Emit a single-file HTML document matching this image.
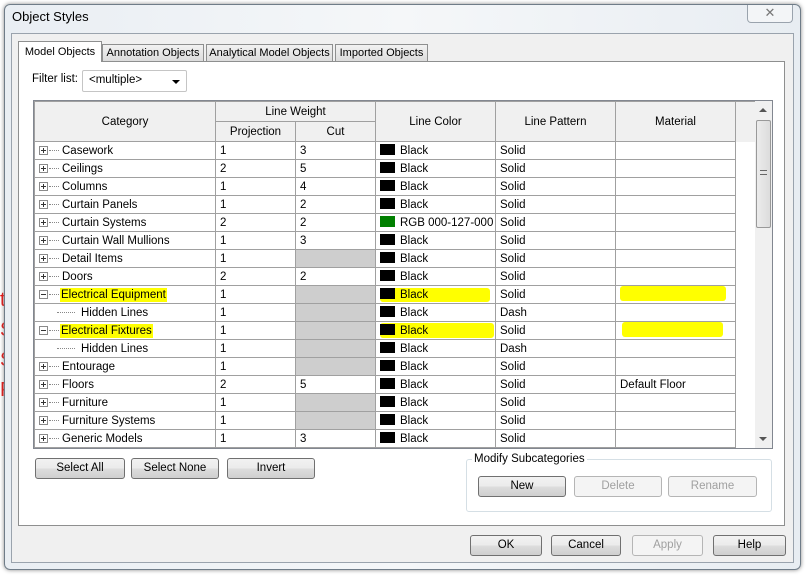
<!DOCTYPE html>
<html><head><meta charset="utf-8"><style>
*{box-sizing:border-box;margin:0;padding:0}
body{width:806px;height:575px;overflow:hidden;background:#fff;font-family:"Liberation Sans",sans-serif;font-size:11.5px;color:#000;position:relative}
.a{position:absolute;white-space:nowrap}
.btn{position:absolute;height:21px;border:1px solid #707070;border-radius:3px;background:linear-gradient(#f2f2f2,#ebebeb 50%,#dddddd 51%,#cfcfcf);text-align:center;line-height:19px;font-size:11.5px}
.dis{color:#a0a0a0;border-color:#b5b5b5;background:#f4f4f4}
table{position:absolute;left:34px;top:101px;width:721px;border-collapse:collapse;table-layout:fixed;background:#fff}
td,th{border:1px solid #a0a0a0;height:18px;padding:0 0 0 4px;white-space:nowrap;overflow:hidden;font-weight:normal;text-align:left;line-height:16px}
th{background:#f0f0f0;text-align:center;height:20px;padding:0}
.h{background:repeating-conic-gradient(#b0b0b0 0 25%,#ececec 0 50%) 0 0/2px 2px}
.sw{display:inline-block;width:15px;height:11px;background:#000;vertical-align:-1px;margin-right:5px}
.pl{display:inline-block;width:9px;height:9px;border:1px solid #8a8a8a;position:relative;vertical-align:-1px;margin-right:1px;background:#fff}
.pl:before{content:"";position:absolute;left:1px;top:3px;width:5px;height:1px;background:#333}
.pl.p:after{content:"";position:absolute;left:3px;top:1px;width:1px;height:5px;background:#333}
.dl{display:inline-block;width:10px;border-top:1px dotted #888;vertical-align:3px;margin-right:3px}
.hl{background:#ffff00;padding:1px 1px;margin-left:-2px}
.yl{position:absolute;background:#ffff00;border-radius:3px}
.tab{position:absolute;top:44px;height:18px;background:linear-gradient(#f2f2f2,#dcdcdc);border:1px solid #8e8f8f;text-align:center;line-height:16px;font-size:11px;white-space:nowrap}
</style></head><body>
<div class="a" style="left:0;top:95px;width:10px;height:470px;background:#fff;color:#e00;font-size:20px;line-height:30px;padding-top:190px">t<br>S<br>S<br>F</div>
<div class="a" style="left:4px;top:4px;width:797px;height:566px;border:1px solid #6f7c88;border-radius:6px;background:linear-gradient(90deg,#e9eef3,#f5f7f9 50%,#e8edf2);box-shadow:0 0 4px #888"></div>
<div class="a" style="left:12px;top:9px;font-size:13px">Object Styles</div>
<div class="a" style="left:747px;top:5px;width:46px;height:18px;border:1px solid #9aa3ad;border-top:none;border-radius:0 0 4px 4px;background:#f3f5f7;text-align:center;color:#777;font-size:13px;line-height:16px">✕</div>
<div class="a" style="left:11px;top:33px;width:783px;height:530px;background:#f0f0f0;border:1px solid #9aa3ad"></div>
<div class="a" style="left:18px;top:61px;width:767px;height:465px;background:#fff;border:1px solid #8e8f8f"></div>
<div class="a" style="left:18px;top:41px;width:84px;height:21px;background:#fff;border:1px solid #8e8f8f;border-bottom:none;text-align:center;line-height:20px;font-size:11px">Model Objects</div>
<div class="tab" style="left:102px;width:102px">Annotation Objects</div>
<div class="tab" style="left:206px;width:127px">Analytical Model Objects</div>
<div class="tab" style="left:335px;width:93px">Imported Objects</div>
<div class="a" style="left:32px;top:73px">Filter list:</div>
<div class="a" style="left:82px;top:70px;width:105px;height:22px;border:1px solid #c5c5c5;border-radius:2px;background:#fff;padding:3px 6px">&lt;multiple&gt;<span style="position:absolute;right:6px;top:9px;border:4px solid transparent;border-top:4px solid #000;border-bottom:none;width:0"></span></div>
<div class="a" style="left:33px;top:100px;width:740px;height:349px;border:1px solid #828790;background:#fff"></div>
<table>
<colgroup><col style="width:181px"><col style="width:80px"><col style="width:80px"><col style="width:120px"><col style="width:120px"><col style="width:120px"><col style="width:20px"></colgroup>
<tr><th rowspan="2">Category</th><th colspan="2">Line Weight</th><th rowspan="2">Line Color</th><th rowspan="2">Line Pattern</th><th rowspan="2">Material</th><th rowspan="2" style="border-bottom:none;border-right:none"></th></tr>
<tr><th>Projection</th><th>Cut</th></tr>
<tr><td><span class="pl p"></span><span class="dl"></span>Casework</td><td>1</td><td>3</td><td><span class="sw"></span>Black</td><td>Solid</td><td></td><td style="border:none"></td></tr>
<tr><td><span class="pl p"></span><span class="dl"></span>Ceilings</td><td>2</td><td>5</td><td><span class="sw"></span>Black</td><td>Solid</td><td></td><td style="border:none"></td></tr>
<tr><td><span class="pl p"></span><span class="dl"></span>Columns</td><td>1</td><td>4</td><td><span class="sw"></span>Black</td><td>Solid</td><td></td><td style="border:none"></td></tr>
<tr><td><span class="pl p"></span><span class="dl"></span>Curtain Panels</td><td>1</td><td>2</td><td><span class="sw"></span>Black</td><td>Solid</td><td></td><td style="border:none"></td></tr>
<tr><td><span class="pl p"></span><span class="dl"></span>Curtain Systems</td><td>2</td><td>2</td><td><span class="sw" style="background:#007f00"></span>RGB 000-127-000</td><td>Solid</td><td></td><td style="border:none"></td></tr>
<tr><td><span class="pl p"></span><span class="dl"></span>Curtain Wall Mullions</td><td>1</td><td>3</td><td><span class="sw"></span>Black</td><td>Solid</td><td></td><td style="border:none"></td></tr>
<tr><td><span class="pl p"></span><span class="dl"></span>Detail Items</td><td>1</td><td class="h"></td><td><span class="sw"></span>Black</td><td>Solid</td><td></td><td style="border:none"></td></tr>
<tr><td><span class="pl p"></span><span class="dl"></span>Doors</td><td>2</td><td>2</td><td><span class="sw"></span>Black</td><td>Solid</td><td></td><td style="border:none"></td></tr>
<tr><td><span class="pl"></span><span class="dl"></span><span class="hl">Electrical Equipment</span></td><td>1</td><td class="h"></td><td style="position:relative"><span class="yl" style="left:4px;top:2px;width:110px;height:14px"></span><span style="position:relative"><span class="sw"></span>Black</span></td><td>Solid</td><td style="position:relative"><span class="yl" style="left:4px;top:0;width:106px;height:15px"></span></td><td style="border:none"></td></tr>
<tr><td style="padding-left:22px"><span class="dl" style="width:18px;margin-right:6px"></span>Hidden Lines</td><td>1</td><td class="h"></td><td><span class="sw"></span>Black</td><td>Dash</td><td></td><td style="border:none"></td></tr>
<tr><td><span class="pl"></span><span class="dl"></span><span class="hl">Electrical Fixtures</span></td><td>1</td><td class="h"></td><td style="position:relative"><span class="yl" style="left:4px;top:1px;width:114px;height:15px"></span><span style="position:relative"><span class="sw"></span>Black</span></td><td>Solid</td><td style="position:relative"><span class="yl" style="left:6px;top:0;width:101px;height:15px"></span></td><td style="border:none"></td></tr>
<tr><td style="padding-left:22px"><span class="dl" style="width:18px;margin-right:6px"></span>Hidden Lines</td><td>1</td><td class="h"></td><td><span class="sw"></span>Black</td><td>Dash</td><td></td><td style="border:none"></td></tr>
<tr><td><span class="pl p"></span><span class="dl"></span>Entourage</td><td>1</td><td class="h"></td><td><span class="sw"></span>Black</td><td>Solid</td><td></td><td style="border:none"></td></tr>
<tr><td><span class="pl p"></span><span class="dl"></span>Floors</td><td>2</td><td>5</td><td><span class="sw"></span>Black</td><td>Solid</td><td>Default Floor</td><td style="border:none"></td></tr>
<tr><td><span class="pl p"></span><span class="dl"></span>Furniture</td><td>1</td><td class="h"></td><td><span class="sw"></span>Black</td><td>Solid</td><td></td><td style="border:none"></td></tr>
<tr><td><span class="pl p"></span><span class="dl"></span>Furniture Systems</td><td>1</td><td class="h"></td><td><span class="sw"></span>Black</td><td>Solid</td><td></td><td style="border:none"></td></tr>
<tr><td><span class="pl p"></span><span class="dl"></span>Generic Models</td><td>1</td><td>3</td><td><span class="sw"></span>Black</td><td>Solid</td><td></td><td style="border:none"></td></tr>
</table>
<div class="a" style="left:755px;top:101px;width:17px;height:347px;background:#f0f0f0"></div>
<div class="a" style="left:759px;top:108px;border:4px solid transparent;border-bottom:4px solid #555;border-top:none;width:0"></div>
<div class="a" style="left:756px;top:120px;width:15px;height:108px;border:1px solid #999;border-radius:2px;background:linear-gradient(90deg,#ececec,#dcdcdc)"></div>
<div class="a" style="left:760px;top:170px;width:7px;height:5px;border-top:1px solid #666;border-bottom:1px solid #666"></div>
<div class="a" style="left:759px;top:437px;border:4px solid transparent;border-top:4px solid #555;border-bottom:none;width:0"></div>
<div class="btn" style="left:35px;top:458px;width:90px">Select All</div>
<div class="btn" style="left:131px;top:458px;width:88px">Select None</div>
<div class="btn" style="left:227px;top:458px;width:88px">Invert</div>
<div class="a" style="left:466px;top:459px;width:306px;height:53px;border:1px solid #d5dfe5;border-radius:3px"></div>
<div class="a" style="left:472px;top:453px;background:#fff;padding:0 2px">Modify Subcategories</div>
<div class="btn" style="left:478px;top:476px;width:88px">New</div>
<div class="btn dis" style="left:574px;top:476px;width:88px">Delete</div>
<div class="btn dis" style="left:668px;top:476px;width:89px">Rename</div>
<div class="btn" style="left:470px;top:535px;width:72px">OK</div>
<div class="btn" style="left:551px;top:535px;width:70px">Cancel</div>
<div class="btn dis" style="left:632px;top:535px;width:71px">Apply</div>
<div class="btn" style="left:713px;top:535px;width:73px">Help</div>
</body></html>
